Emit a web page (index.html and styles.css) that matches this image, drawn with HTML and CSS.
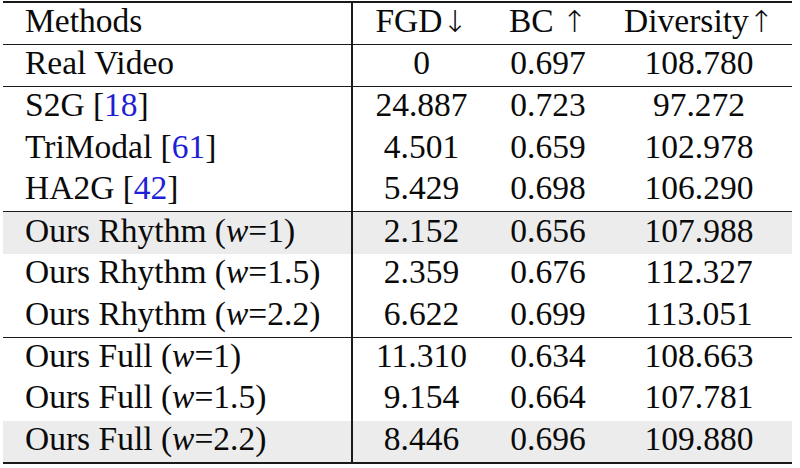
FILE: index.html
```html
<!DOCTYPE html>
<html lang="en">

<head>
    <meta charset="UTF-8">
    <meta name="viewport" content="width=device-width, initial-scale=1.0">
    <title>Results</title>
    <link rel="stylesheet" href="styles.css">
</head>

<body>
    <table class="results">
        <thead>
            <tr>
                <th class="method">Methods</th>
                <th class="fgd">FGD<span class="arrow">↓</span></th>
                <th class="bc">BC <span class="arrow">↑</span></th>
                <th class="div">Diversity<span class="arrow">↑</span></th>
            </tr>
        </thead>
        <tbody>
            <tr>
                <td class="method">Real Video</td>
                <td>0</td>
                <td>0.697</td>
                <td>108.780</td>
            </tr>
        </tbody>
        <tbody>
            <tr>
                <td class="method">S2G [<span class="cite">18</span>]</td>
                <td>24.887</td>
                <td>0.723</td>
                <td>97.272</td>
            </tr>
            <tr>
                <td class="method">TriModal [<span class="cite">61</span>]</td>
                <td>4.501</td>
                <td>0.659</td>
                <td>102.978</td>
            </tr>
            <tr>
                <td class="method">HA2G [<span class="cite">42</span>]</td>
                <td>5.429</td>
                <td>0.698</td>
                <td>106.290</td>
            </tr>
        </tbody>
        <tbody>
            <tr class="shade">
                <td class="method">Ours Rhythm (<i>w</i>=1)</td>
                <td>2.152</td>
                <td>0.656</td>
                <td>107.988</td>
            </tr>
            <tr>
                <td class="method">Ours Rhythm (<i>w</i>=1.5)</td>
                <td>2.359</td>
                <td>0.676</td>
                <td>112.327</td>
            </tr>
            <tr>
                <td class="method">Ours Rhythm (<i>w</i>=2.2)</td>
                <td>6.622</td>
                <td>0.699</td>
                <td>113.051</td>
            </tr>
        </tbody>
        <tbody>
            <tr>
                <td class="method">Ours Full (<i>w</i>=1)</td>
                <td>11.310</td>
                <td>0.634</td>
                <td>108.663</td>
            </tr>
            <tr>
                <td class="method">Ours Full (<i>w</i>=1.5)</td>
                <td>9.154</td>
                <td>0.664</td>
                <td>107.781</td>
            </tr>
            <tr class="shade">
                <td class="method">Ours Full (<i>w</i>=2.2)</td>
                <td>8.446</td>
                <td>0.696</td>
                <td>109.880</td>
            </tr>
        </tbody>
    </table>
</body>

</html>
```

FILE: styles.css
```css
* {
    box-sizing: border-box;
}

body {
    margin: 0;
    padding: 1px 0 0 3px;
    background-color: #fff;
    font-family: "Liberation Serif", serif;
    color: #0a0a0a;
}

.results {
    width: 789px;
    border-collapse: collapse;
    font-size: 33.5px;
    border-top: 2px solid #1a1a1a;
    border-bottom: 2px solid #1a1a1a;
}

.results tbody {
    border-top: 1px solid #1a1a1a;
}

.results th,
.results td {
    height: 41.8px;
    padding: 0 0 5px 0;
    line-height: 36px;
    font-weight: normal;
    text-align: center;
    vertical-align: middle;
    white-space: nowrap;
}

.results .method {
    width: 349px;
    text-align: left;
    padding-left: 22px;
    border-right: 2px solid #1a1a1a;
}

.results .fgd {
    width: 138px;
}

.results .bc {
    width: 116px;
}

.results .div {
    width: 186px;
}

.arrow {
    font-family: "DejaVu Sans", sans-serif;
    font-weight: 200;
    font-size: 30px;
    line-height: 1;
}

.cite {
    color: #1f1fd6;
}

.shade td {
    background-color: #ececec;
}
```
